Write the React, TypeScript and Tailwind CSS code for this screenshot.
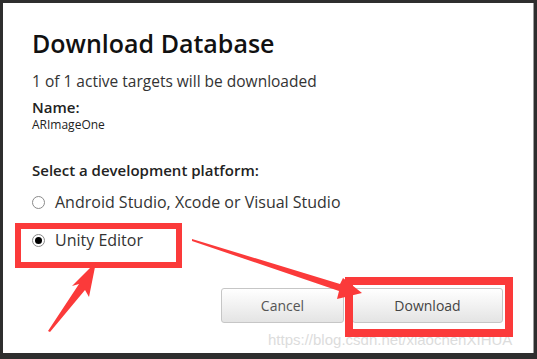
import React from "react";

const Radio = ({ checked }: { checked?: boolean }) => (
  <span className="flex h-[13px] w-[13px] items-center justify-center rounded-full border border-[#8a8a8a] bg-white">
    {checked && <span className="h-[7px] w-[7px] rounded-full bg-black" />}
  </span>
);

const App = () => {
  return (
    <div className="h-[359px] w-[537px] bg-[#2e2e2e] pt-[3px] pl-[3px] pr-[3px] pb-[6px]">
      <div
        className="relative flex h-full flex-col border-r border-[#9c9c9c] bg-white pl-[29px] pr-[30px] pt-[24px] text-[#222]"
        style={{ fontFamily: '"Open Sans", "Noto Sans", sans-serif' }}
      >
        {/* heading */}
        <h1 className="text-[25px] font-semibold leading-[32px] text-[#111]">Download Database</h1>
        <p className="mt-[12px] text-[15.5px] leading-[20px] text-[#333]">
          1 of 1 active targets will be downloaded
        </p>
        <p className="mt-[6px] text-[15px] font-semibold leading-[20px] text-[#222]">Name:</p>
        <p className="text-[12px] leading-[16px] text-[#222]">ARImageOne</p>

        {/* platform choice */}
        <p className="mt-[27px] text-[15px] font-semibold leading-[20px] text-[#222]">
          Select a development platform:
        </p>
        <label className="mt-[12px] flex items-center gap-[10px] text-[16px] leading-[20px] text-[#333]">
          <Radio />
          Android Studio, Xcode or Visual Studio
        </label>
        <label className="mt-[18px] flex items-center gap-[10px] text-[16px] leading-[20px] text-[#333]">
          <Radio checked />
          Unity Editor
        </label>

        {/* actions */}
        <div className="mt-[38px] flex justify-end gap-[8px]">
          <button className="h-[35px] w-[123px] rounded-[3px] border border-[#c6c6c6] bg-gradient-to-b from-white to-[#e4e4e4] text-[14px] text-[#555]">
            Cancel
          </button>
          <button className="h-[35px] w-[151px] rounded-[3px] border border-[#c6c6c6] bg-gradient-to-b from-white to-[#e4e4e4] text-[14px] text-[#444]">
            Download
          </button>
        </div>

        {/* watermark */}
        <span
          className="absolute left-[265px] top-[328px] text-[15px] leading-[18px] text-[#dcdcdc]"
          style={{ fontFamily: '"Liberation Sans", Arial, sans-serif' }}
        >
          https://blog.csdn.net/xiaochenXIHUA
        </span>

        {/* annotation boxes */}
        <div className="absolute left-[12px] top-[220px] h-[45px] w-[167px] border-[6px] border-[#fb3a3a]" />
        <div className="absolute left-[342px] top-[274px] h-[60px] w-[168px] border-[8px] border-[#fb3a3a]" />

        {/* annotation arrows */}
        <svg className="pointer-events-none absolute left-[-3px] top-[-3px]" width="537" height="359" viewBox="0 0 537 359">
          <polygon
            fill="#fb3a3a"
            points="192,239 340,284 343,278 362,293 337,299 339,291 192,241"
          />
          <polygon
            fill="#fb3a3a"
            points="48,331 79,284 72,286 96,262 89,297 85,290 50,332"
          />
        </svg>
      </div>
    </div>
  );
};

export default App;
